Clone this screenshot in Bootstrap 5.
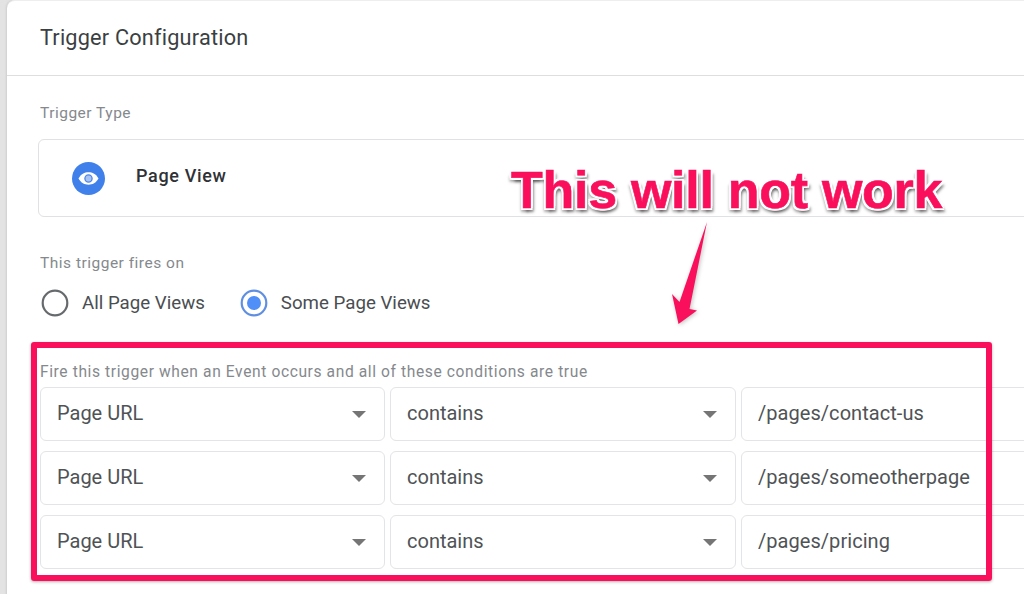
<!DOCTYPE html>
<html lang="en">
<head>
<meta charset="utf-8">
<title>Trigger Configuration</title>
<link href="https://cdn.jsdelivr.net/npm/bootstrap@5.3.0/dist/css/bootstrap.min.css" rel="stylesheet">
<style>
html, body { height: 100%; overflow: hidden; }
body { background: #e3e3e3; font-family: Roboto, "Liberation Sans", sans-serif; color: #3c4043; width: 1024px; height: 594px; position: relative; }
.shell { background: #fff; margin-left: 7px; width: 1040px; height: 620px; border-top-left-radius: 8px; border-top: 1px solid #eee; box-shadow: -1px 0 2px #cfcfcf; }
.cfg-head { height: 75px; padding: 23px 0 0 33px; font-size: 21.700px; line-height: 28px; color: #3b3f42; border-bottom: 1px solid #dcdee0; letter-spacing: .2px; }
.cfg-body { padding: 27px 0 0 33px; }
.cap { font-size: 15.500px; line-height: 20px; color: #85898d; letter-spacing: .5px; }
.type-box { margin-top: 16px; margin-left: -2px; height: 78px; border: 1px solid #dfe1e5; border-radius: 6px 0 0 6px; width: 1010px; padding-left: 33px; gap: 31px; }
.type-name { font-size: 18px; font-weight: 500; color: #2f3235; letter-spacing: .65px; margin-bottom: 6px; }
.fires { margin-top: 36px; }
.radios { margin-top: 8px; margin-left: -2px; padding-left: 3px; height: 44px; gap: 35px; }
.rd { gap: 13px; font-size: 18.700px; color: #4a4e51; }
.sec { margin-top: 37px; }
.sec .cap { font-size: 15.600px; line-height: 20px; letter-spacing: .6px; }
.rule { margin-top: 5px; height: 54px; gap: 5px; margin-bottom: 10px; }
.rule + .rule { margin-top: 0; }
.fld { height: 54px; border: 1px solid #e3e4e8; border-radius: 6px; padding: 0 18px 0 16px; font-size: 20px; color: #4f5356; background: #fff; flex: none; }
.fld span { margin-bottom: 2px; }
.fld-a { width: 345px; }
.fld-b { width: 346px; }
.fld-c { width: 300px; border-radius: 6px 0 0 6px; letter-spacing: .05px; }
.caret-d { width: 0; height: 0; border-left: 7px solid transparent; border-right: 7px solid transparent; border-top: 7px solid #757575; margin-top: 1px; }
.outline-box { position: absolute; left: 31px; top: 342px; width: 961px; height: 239px; border: 6px solid #f90f5b; border-radius: 3px; box-shadow: 0 1px 3px rgba(0,0,0,.3); pointer-events: none; }
.shout { position: absolute; left: 511px; top: 160px; font-family: "Liberation Sans", sans-serif; font-weight: 700; font-size: 52px; line-height: 60px; letter-spacing: -.28px; color: #f90f5b; white-space: nowrap; -webkit-text-stroke: .6px #f90f5b; text-shadow: 2px 0 0 #fff, -2px 0 0 #fff, 0 2px 0 #fff, 0 -2px 0 #fff, 2px 2px 0 #fff, -2px 2px 0 #fff, 2px -2px 0 #fff, -2px -2px 0 #fff, 3px 4px 3px rgba(0,0,0,.5), -2px 4px 3px rgba(0,0,0,.35); }
.arrow-mark { position: absolute; left: 665px; top: 218px; filter: drop-shadow(1px 1px 2px rgba(0,0,0,.25)); }
</style>
</head>
<body>
<div class="shell">
  <div class="cfg-head">Trigger Configuration</div>
  <div class="cfg-body">
    <div class="cap">Trigger Type</div>
    <div class="type-box d-flex align-items-center">
      <svg width="33" height="33" viewBox="0 0 33 33" aria-hidden="true"><circle cx="16.5" cy="16.5" r="16.5" fill="#3f80ea"/><path d="M6.5 16.5C9 12 12.500 10.300 16.500 10.300S24 12 26.500 16.500C24 21 20.500 22.700 16.500 22.700S9 21 6.500 16.500Z" fill="#fff"/><circle cx="16.500" cy="16.500" r="3.600" fill="#a9c4f2" stroke="#4f86e6" stroke-width="1.300"/></svg>
      <span class="type-name">Page View</span>
    </div>
    <div class="cap fires">This trigger fires on</div>
    <div class="radios d-flex align-items-center">
      <div class="rd d-flex align-items-center">
        <svg width="28" height="28" viewBox="0 0 28 28" aria-hidden="true"><circle cx="14" cy="14" r="12.300" fill="none" stroke="#666a6d" stroke-width="2.200"/></svg>
        <span>All Page Views</span>
      </div>
      <div class="rd d-flex align-items-center">
        <svg width="28" height="28" viewBox="0 0 28 28" aria-hidden="true"><circle cx="14" cy="14" r="12.300" fill="none" stroke="#5f8fe0" stroke-width="2.200"/><circle cx="14" cy="14" r="7" fill="#4f8ff7"/></svg>
        <span>Some Page Views</span>
      </div>
    </div>
    <div class="sec">
      <div class="cap">Fire this trigger when an Event occurs and all of these conditions are true</div>
      <div class="rule d-flex">
        <div class="fld fld-a d-flex align-items-center justify-content-between"><span>Page URL</span><i class="caret-d"></i></div>
        <div class="fld fld-b d-flex align-items-center justify-content-between"><span>contains</span><i class="caret-d"></i></div>
        <div class="fld fld-c d-flex align-items-center"><span>/pages/contact-us</span></div>
      </div>
      <div class="rule d-flex">
        <div class="fld fld-a d-flex align-items-center justify-content-between"><span>Page URL</span><i class="caret-d"></i></div>
        <div class="fld fld-b d-flex align-items-center justify-content-between"><span>contains</span><i class="caret-d"></i></div>
        <div class="fld fld-c d-flex align-items-center"><span>/pages/someotherpage</span></div>
      </div>
      <div class="rule d-flex">
        <div class="fld fld-a d-flex align-items-center justify-content-between"><span>Page URL</span><i class="caret-d"></i></div>
        <div class="fld fld-b d-flex align-items-center justify-content-between"><span>contains</span><i class="caret-d"></i></div>
        <div class="fld fld-c d-flex align-items-center"><span>/pages/pricing</span></div>
      </div>
    </div>
  </div>
</div>
<div class="outline-box"></div>
<div class="shout">This will not work</div>
<svg class="arrow-mark" width="46" height="110" viewBox="0 0 46 110" aria-hidden="true"><path d="M42 4L24.500 91L32 92.500L13.500 106L7 76L14.500 84Z" fill="#f90f5b"/></svg>
</body>
</html>
